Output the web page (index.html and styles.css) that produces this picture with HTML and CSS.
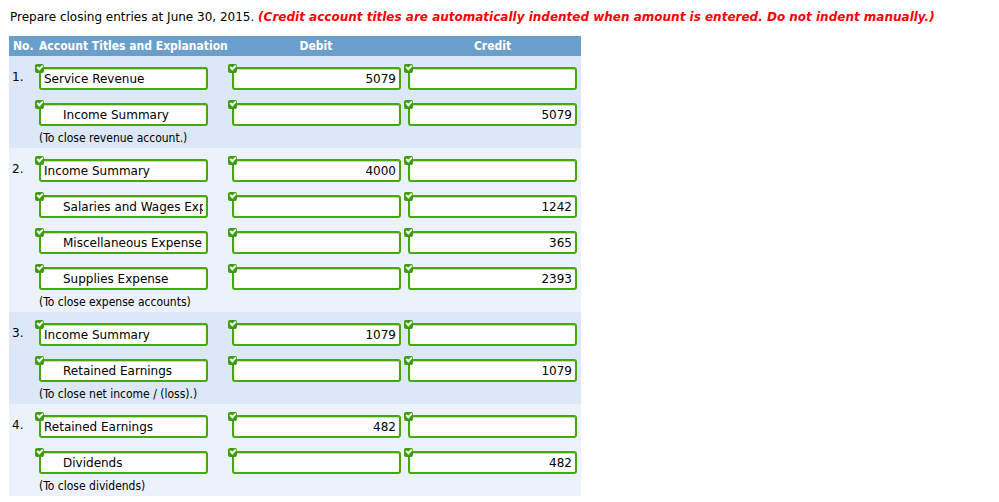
FILE: index.html
```html
<!DOCTYPE html>
<html lang="en">
<head>
    <meta charset="UTF-8">
    <title>Closing entries</title>
    <link rel="stylesheet" href="styles.css">
</head>
<body>
    <p class="intro">Prepare closing entries at June 30, 2015. <em>(Credit account titles are automatically indented when amount is entered. Do not indent manually.)</em></p>

    <div class="sheet">
        <div class="head">
            <span>No.</span>
            <span>Account Titles and Explanation</span>
            <span class="mid">Debit</span>
            <span class="mid">Credit</span>
        </div>

        <!-- 1 -->
        <div class="entry dark">
            <div class="no">1.</div>
            <div class="cell"><i class="ok"></i><input class="acct" value="Service Revenue"></div>
            <div class="cell"><i class="ok"></i><input class="amt" value="5079"></div>
            <div class="cell"><i class="ok"></i><input class="amt" value=""></div>

            <div class="cell first"><i class="ok"></i><input class="acct cr" value="Income Summary"></div>
            <div class="cell"><i class="ok"></i><input class="amt" value=""></div>
            <div class="cell"><i class="ok"></i><input class="amt" value="5079"></div>

            <div class="expl">(To close revenue account.)</div>
        </div>

        <!-- 2 -->
        <div class="entry light">
            <div class="no">2.</div>
            <div class="cell"><i class="ok"></i><input class="acct" value="Income Summary"></div>
            <div class="cell"><i class="ok"></i><input class="amt" value="4000"></div>
            <div class="cell"><i class="ok"></i><input class="amt" value=""></div>

            <div class="cell first"><i class="ok"></i><input class="acct cr" value="Salaries and Wages Expense"></div>
            <div class="cell"><i class="ok"></i><input class="amt" value=""></div>
            <div class="cell"><i class="ok"></i><input class="amt" value="1242"></div>

            <div class="cell first"><i class="ok"></i><input class="acct cr" value="Miscellaneous Expense"></div>
            <div class="cell"><i class="ok"></i><input class="amt" value=""></div>
            <div class="cell"><i class="ok"></i><input class="amt" value="365"></div>

            <div class="cell first"><i class="ok"></i><input class="acct cr" value="Supplies Expense"></div>
            <div class="cell"><i class="ok"></i><input class="amt" value=""></div>
            <div class="cell"><i class="ok"></i><input class="amt" value="2393"></div>

            <div class="expl">(To close expense accounts)</div>
        </div>

        <!-- 3 -->
        <div class="entry dark">
            <div class="no">3.</div>
            <div class="cell"><i class="ok"></i><input class="acct" value="Income Summary"></div>
            <div class="cell"><i class="ok"></i><input class="amt" value="1079"></div>
            <div class="cell"><i class="ok"></i><input class="amt" value=""></div>

            <div class="cell first"><i class="ok"></i><input class="acct cr" value="Retained Earnings"></div>
            <div class="cell"><i class="ok"></i><input class="amt" value=""></div>
            <div class="cell"><i class="ok"></i><input class="amt" value="1079"></div>

            <div class="expl">(To close net income / (loss).)</div>
        </div>

        <!-- 4 -->
        <div class="entry light">
            <div class="no">4.</div>
            <div class="cell"><i class="ok"></i><input class="acct" value="Retained Earnings"></div>
            <div class="cell"><i class="ok"></i><input class="amt" value="482"></div>
            <div class="cell"><i class="ok"></i><input class="amt" value=""></div>

            <div class="cell first"><i class="ok"></i><input class="acct cr" value="Dividends"></div>
            <div class="cell"><i class="ok"></i><input class="amt" value=""></div>
            <div class="cell"><i class="ok"></i><input class="amt" value="482"></div>

            <div class="expl">(To close dividends)</div>
        </div>
    </div>
</body>
</html>
```

FILE: styles.css
```css
*{padding: 0;margin: 0;box-sizing: border-box;}
body{background: #fff;color: #000;font-family: "DejaVu Sans", Verdana, sans-serif;}

.intro{padding: 9px 0 0 10px;height: 36px;font-size: 12px;line-height: 16px;}
.intro em{color: #ff0000;font-weight: bold;font-style: italic;}

.sheet{margin-left: 9px;width: 572px;}
.head, .entry{display: grid;grid-template-columns: 26px 193px 176px 177px;}
.head{height: 20px;background: #6a9fcb;color: #fff;font-family: "DejaVu Sans Condensed", "DejaVu Sans", sans-serif;font-weight: bold;font-size: 12px;line-height: 20px;white-space: nowrap;}
.head span{padding-left: 4px;}
.head .mid{padding-left: 0;text-align: center;}

.entry{padding: 8px 0 2px;row-gap: 10px;}
.dark{background: #dce7f7;}
.light{background: #ecf2fc;}

.no{grid-column: 1;grid-row: 1;padding: 6px 0 0 3px;font-size: 12px;}
.first{grid-column: 2;}
.cell{position: relative;padding: 3px 0 0 4px;}

/* little green tick in the corner of each answer box */
.ok{position: absolute;left: 0;top: 0;width: 9px;height: 9px;border-radius: 2px;background: #3f9c12;}
.ok::after{content: "";position: absolute;left: 2px;top: 1px;width: 4px;height: 2px;border-left: 2px solid #fff;border-bottom: 2px solid #fff;transform: rotate(-45deg);}

input{display: block;width: 169px;height: 23px;border: 2px solid #45aa05;border-radius: 3px;background: #fff;box-shadow: inset 0 1px 1px #ccc;font-family: "DejaVu Sans", Verdana, sans-serif;font-size: 12px;color: #000;padding: 0 3px;outline: none;}
.acct.cr{padding-left: 22px;}
.amt{text-align: right;}

.expl{grid-column: 2 / span 3;margin-top: -6px;padding-left: 4px;height: 16px;font-family: "DejaVu Sans Condensed", "DejaVu Sans", sans-serif;font-size: 12px;line-height: 16px;}
```
